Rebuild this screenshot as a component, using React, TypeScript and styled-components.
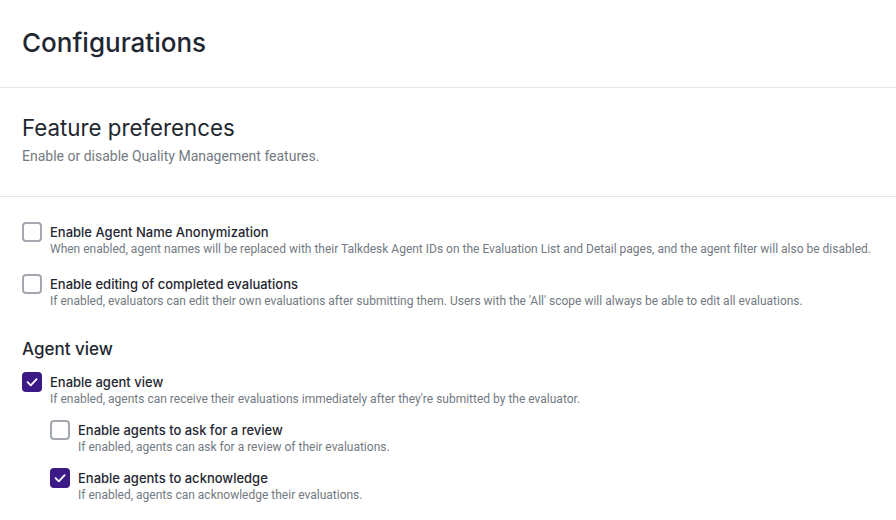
import styled, { createGlobalStyle } from 'styled-components';

const GlobalStyle = createGlobalStyle`
  html, body {
    margin: 0;
    padding: 0;
    background: #fff;
  }
  body {
    font-family: Inter, 'Noto Sans', sans-serif;
    color: #1f2731;
  }
`;

interface OptionProps {
  label: string;
  description: string;
  checked?: boolean;
  nested?: boolean;
}

const CheckIcon = () => (
  <svg width='20' height='20' viewBox='0 0 20 20' fill='none'>
    <path d='M5.6 10.2l3.2 3.2 5.8-6.2' stroke='#fff' strokeWidth='1.8' strokeLinecap='round' strokeLinejoin='round' />
  </svg>
);

const Option = ({ label, description, checked = false, nested = false }: OptionProps) => {
  return (
    <OptionRow $nested={nested}>
      <Box $checked={checked}>{checked && <CheckIcon />}</Box>
      <OptionText>
        <OptionLabel>{label}</OptionLabel>
        <OptionDesc>{description}</OptionDesc>
      </OptionText>
    </OptionRow>
  );
};

const App = () => {
  return (
    <Page>
      <GlobalStyle />
      <Header>
        <Title>Configurations</Title>
      </Header>
      <Section>
        <SectionTitle>Feature preferences</SectionTitle>
        <SectionDesc>Enable or disable Quality Management features.</SectionDesc>
      </Section>
      <Options>
        <Group>
          <Option
            label='Enable Agent Name Anonymization'
            description='When enabled, agent names will be replaced with their Talkdesk Agent IDs on the Evaluation List and Detail pages, and the agent filter will also be disabled.'
          />
          <Option
            label='Enable editing of completed evaluations'
            description="If enabled, evaluators can edit their own evaluations after submitting them. Users with the 'All' scope will always be able to edit all evaluations."
          />
        </Group>
        <GroupTitle>Agent view</GroupTitle>
        <SubGroup>
          <Option
            checked
            label='Enable agent view'
            description="If enabled, agents can receive their evaluations immediately after they're submitted by the evaluator."
          />
          <Option
            nested
            label='Enable agents to ask for a review'
            description='If enabled, agents can ask for a review of their evaluations.'
          />
          <Option
            nested
            checked
            label='Enable agents to acknowledge'
            description='If enabled, agents can acknowledge their evaluations.'
          />
        </SubGroup>
      </Options>
    </Page>
  );
};

const Page = styled.div`
  width: 896px;
  min-height: 520px;
  background: #fff;
`;

const Header = styled.header`
  padding: 27px 22px 28px;
  border-bottom: 1px solid #e4e6e9;
`;

const Title = styled.h1`
  margin: 0;
  font-family: Inter, sans-serif;
  font-size: 26px;
  line-height: 32px;
  font-weight: 500;
  color: #1f2731;
`;

const Section = styled.section`
  padding: 26px 22px 30px;
  border-bottom: 1px solid #e4e6e9;
`;

const SectionTitle = styled.h2`
  margin: 0;
  font-family: Inter, sans-serif;
  font-size: 22.3px;
  line-height: 28px;
  font-weight: 400;
  color: #1f2731;
`;

const SectionDesc = styled.p`
  margin: 4px 0 0;
  font-family: Roboto, sans-serif;
  font-size: 14px;
  line-height: 20px;
  color: #737a82;
`;

const Options = styled.div`
  padding: 25px 22px 0;
`;

const Group = styled.div`
  display: flex;
  flex-direction: column;
  gap: 17px;
`;

const SubGroup = styled.div`
  display: flex;
  flex-direction: column;
  gap: 13px;
`;

const GroupTitle = styled.h3`
  margin: 28px 0 11px;
  font-family: Inter, sans-serif;
  font-size: 17px;
  line-height: 24px;
  font-weight: 500;
  color: #1f2731;
`;

const OptionRow = styled.div<{ $nested: boolean }>`
  display: flex;
  align-items: flex-start;
  gap: 8px;
  padding-left: ${(p) => (p.$nested ? '28px' : '0')};
`;

const Box = styled.span<{ $checked: boolean }>`
  flex: none;
  box-sizing: border-box;
  width: 20px;
  height: 20px;
  border-radius: 4px;
  display: flex;
  align-items: center;
  justify-content: center;
  border: ${(p) => (p.$checked ? 'none' : '2px solid #a3a8ae')};
  background: ${(p) => (p.$checked ? '#3b1a87' : '#fff')};
`;

const OptionText = styled.div`
  display: flex;
  flex-direction: column;
  padding-top: 1px;
`;

const OptionLabel = styled.span`
  font-family: Inter, sans-serif;
  font-size: 13px;
  line-height: 18px;
  font-weight: 500;
  color: #1f2731;
`;

const OptionDesc = styled.span`
  font-family: Roboto, sans-serif;
  font-size: 12px;
  line-height: 16px;
  color: #737a82;
`;

export default App;
